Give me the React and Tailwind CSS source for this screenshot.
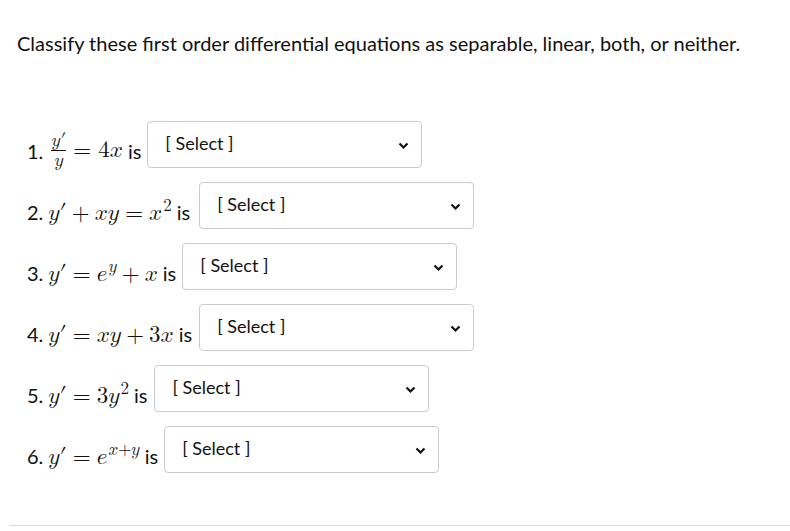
import React from "react";

const MATH = { fontFamily: '"Latin Modern Math", "Liberation Serif", serif' };

const M = ({ children, className = "" }) => (
  <span className={className} style={MATH}>
    {children}
  </span>
);
const Bin = ({ children }) => (
  <span className="mx-[5px]" style={MATH}>
    {children}
  </span>
);
const Rel = ({ children, cls = "mx-[6px]" }) => (
  <span className={cls} style={MATH}>
    {children}
  </span>
);
const Sup = ({ children }) => (
  <span className="relative -top-[9px] ml-[1px] text-[17px] leading-none" style={MATH}>
    {children}
  </span>
);
const Yp = () => <M>𝑦′</M>;

function SelectBox({ ml }) {
  return (
    <div className={"flex h-[47px] w-[275px] shrink-0 items-center justify-between rounded-[4px] border border-[#c7cdd1] bg-white pl-[17px] pr-[12px] " + ml}>
      <span className="relative -top-[1px] text-[18px] text-[#111]">[ Select ]</span>
      <svg width="11" height="8" viewBox="0 0 11 8" className="mt-[2px]">
        <polyline points="1.5,1.5 5.5,5.5 9.5,1.5" fill="none" stroke="#111" strokeWidth="2.2" />
      </svg>
    </div>
  );
}

function Row({ n, children, ml = "ml-[6px]" }) {
  return (
    <div className="flex items-center">
      <div className="flex items-baseline whitespace-nowrap pt-[12px] text-[20px] text-[#111]">
        <span>{n}.</span>
        <span className="ml-[5px] flex items-baseline text-[23px] leading-none">{children}</span>
        <span className="ml-[5px]">is</span>
      </div>
      <SelectBox ml={ml} />
    </div>
  );
}

export default function App() {
  return (
    <div className="h-[531px] w-[790px] overflow-hidden bg-white text-[#111]" style={{ fontFamily: 'Lato, "Noto Sans", sans-serif' }}>
      <div className="pl-[17px] pt-[31px] text-[20px] leading-[24px]">
        Classify these first order differential equations as separable, linear, both, or neither.
      </div>
      <div className="mt-[66px] flex flex-col gap-[14px] pl-[27px]">
        <div className="flex items-center">
          <div className="flex items-center whitespace-nowrap pt-[12px] text-[20px] text-[#111]">
            <span>1.</span>
            <span className="ml-[8px] inline-flex flex-col items-center text-[18px] leading-[15px]">
              <Yp />
              <span className="my-[2px] h-[1px] w-[15px] bg-[#111]" />
              <M>𝑦</M>
            </span>
            <span className="flex items-baseline text-[23px]">
              <Rel cls="mx-[7px]">=</Rel>
              <M>4𝑥</M>
            </span>
            <span className="ml-[5px]">is</span>
          </div>
          <SelectBox ml="ml-[6px]" />
        </div>
        <Row n="2" ml="ml-[9px]">
          <Yp />
          <Bin>+</Bin>
          <M>𝑥𝑦</M>
          <Rel>=</Rel>
          <M>𝑥</M>
          <Sup>2</Sup>
        </Row>
        <Row n="3">
          <Yp />
          <Rel>=</Rel>
          <M>𝑒</M>
          <Sup>𝑦</Sup>
          <Bin>+</Bin>
          <M>𝑥</M>
        </Row>
        <Row n="4" ml="ml-[7px]">
          <Yp />
          <Rel>=</Rel>
          <M>𝑥𝑦</M>
          <Bin>+</Bin>
          <M>3𝑥</M>
        </Row>
        <Row n="5" ml="ml-[7px]">
          <Yp />
          <Rel>=</Rel>
          <M>3𝑦</M>
          <Sup>2</Sup>
        </Row>
        <Row n="6">
          <Yp />
          <Rel>=</Rel>
          <M>𝑒</M>
          <Sup>𝑥+𝑦</Sup>
        </Row>
      </div>
      <div className="ml-[10px] mt-[52px] h-[1px] bg-[#d9dcde]" />
    </div>
  );
}
